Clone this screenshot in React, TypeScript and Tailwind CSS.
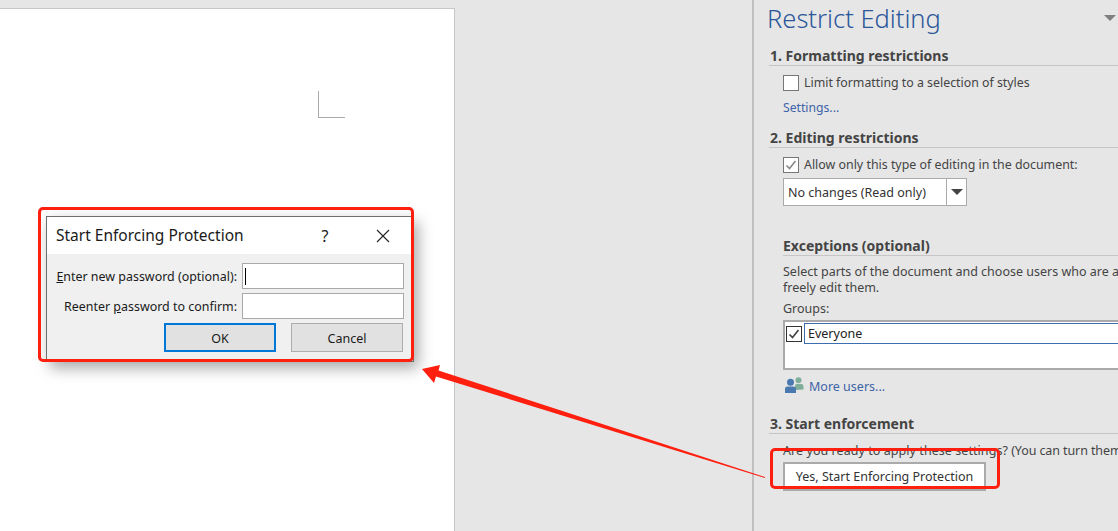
import React from 'react'

const font = "font-['Noto_Sans',sans-serif]"

const SectionHead = ({ children, className = '' }: { children: React.ReactNode; className?: string }) => (
	<div className={`border-b border-b-[#c6c6c6] text-[14px] font-bold leading-[19px] text-[#444444] ${className}`}>{children}</div>
)

const Check = ({ checked = false, dark = false }: { checked?: boolean; dark?: boolean }) => (
	<div className={`flex h-[16px] w-[16px] shrink-0 items-center justify-center border bg-white ${dark ? 'border-[#333333]' : 'border-[#777777]'}`}>
		{checked && (
			<svg width="12" height="12" viewBox="0 0 12 12" fill="none">
				<path d="M1.5 6.5 L4.5 9.5 L10.5 2" stroke={dark ? '#444444' : '#8a8a8a'} strokeWidth="1.7" />
			</svg>
		)}
	</div>
)

const UsersIcon = () => (
	<svg width="19" height="18" viewBox="0 0 19 18" className="shrink-0">
		<circle cx="13.5" cy="3.2" r="3" fill="#7fae9b" />
		<path d="M10 13 V9 Q10 7 12 7 H16 Q18.500 7 18.500 9 V12.500 Z" fill="#7fae9b" />
		<circle cx="5.500" cy="5.200" r="3.500" fill="#4a78b0" />
		<path d="M0 16 V12 Q0 9.500 2.500 9.500 H8 Q11 9.500 11 12 V16 Z" fill="#4a78b0" />
	</svg>
)

const Dialog = () => (
	<div className="absolute left-[46px] top-[216px] flex h-[146px] w-[368px] flex-col border border-[#6f6f6f] bg-[#f0f0f0] shadow-[4px_6px_14px_rgba(0,0,0,0.35)]">
		<div className="flex h-[37px] items-center bg-white pl-[9px] text-[15.5px] text-[#1a1a1a]">
			<span className="w-[249px] whitespace-nowrap">Start Enforcing Protection</span>
			<span className="w-[40px] text-center text-[16px]">?</span>
			<svg width="14" height="14" viewBox="0 0 14 14" fill="none" className="ml-[31px]">
				<path d="M1 1 L13 13 M13 1 L1 13" stroke="#222222" strokeWidth="1.100" />
			</svg>
		</div>
		<div className="flex flex-col gap-[4px] pl-[9px] pt-[9px] text-[12.450px] text-[#1a1a1a]">
			<div className="flex h-[26px] items-center">
				<span className="w-[181px] whitespace-nowrap pt-[2px] text-right"><u>E</u>nter new password (optional):</span>
				<div className="ml-[5px] flex h-[26px] w-[162px] items-center border border-[#a9a9a9] bg-white pl-[2px]">
					<div className="h-[17px] w-px bg-black" />
				</div>
			</div>
			<div className="flex h-[26px] items-center">
				<span className="w-[181px] whitespace-nowrap pt-[2px] text-right">Reenter <u>p</u>assword to confirm:</span>
				<div className="ml-[5px] h-[26px] w-[162px] border border-[#a9a9a9] bg-white" />
			</div>
		</div>
		<div className="mt-[4px] flex gap-[15px] pl-[117px] text-[12.500px] text-[#1a1a1a]">
			<div className="flex h-[29px] w-[112px] items-center justify-center border-2 border-[#0078d7] bg-[#e1e1e1] pt-[3px]">OK</div>
			<div className="flex h-[29px] w-[112px] items-center justify-center border border-[#adadad] bg-[#e1e1e1] pt-[3px]">Cancel</div>
		</div>
	</div>
)

const Annotations = () => (
	<>
		<div className="absolute left-[38px] top-[207px] h-[155px] w-[376px] rounded-[5px] border-[3px] border-[#ff1f0f]" />
		<div className="absolute left-[770px] top-[448px] h-[41px] w-[230px] rounded-[5px] border-[3px] border-[#ff1f0f]" />
		<svg className="pointer-events-none absolute inset-0" width="1118" height="531" viewBox="0 0 1118 531">
			<polygon points="422,369 440,365 438.500,370.500 765,477 765,478 436,376.500 434,383" fill="#ff1f0f" />
		</svg>
	</>
)

export default function App() {
	return (
		<div className={`relative flex h-[531px] w-[1118px] overflow-hidden bg-[#e6e6e6] ${font}`}>
			<div className="w-[752px] shrink-0 pt-[8px]">
				<div className="h-full w-[455px] border-r border-t border-[#c6c6c6] bg-white pl-[318px] pt-[82px]">
					<div className="h-[27px] w-[27px] border-b border-l border-[#aaaaaa]" />
				</div>
			</div>

			<div className="min-w-0 flex-1 overflow-hidden border-l-2 border-l-[#c0c0c0] text-[12.500px] leading-[17px] text-[#444444]">
				<div className="flex h-[37px] items-center pl-[13px] pr-[2px]">
					<span className="flex-1 text-[25.5px] font-light text-[#2b579a]">Restrict Editing</span>
					<div className="mb-[2px] h-0 w-0 border-x-[6px] border-t-[6px] border-x-transparent border-t-[#808080]" />
				</div>

				<div className="pl-[15px]">
					<SectionHead className="mt-[9px] pl-[1px]">1. Formatting restrictions</SectionHead>
					<div className="ml-[14px] mt-[8px] flex items-center gap-[5px]">
						<Check />
						<span className="whitespace-nowrap text-[12.350px]">Limit formatting to a selection of styles</span>
					</div>
					<div className="ml-[14px] mt-[8px] text-[12.200px] text-[#3d63a8]">Settings...</div>

					<SectionHead className="mt-[12px] pl-[1px]">2. Editing restrictions</SectionHead>
					<div className="ml-[14px] mt-[8px] flex items-center gap-[5px]">
						<Check checked />
						<span className="whitespace-nowrap text-[12.400px]">Allow only this type of editing in the document:</span>
					</div>
					<div className="ml-[14px] mt-[5px] flex h-[28px] w-[184px] items-center border border-[#aaaaaa] bg-white">
						<span className="flex-1 pl-[4px] text-[#333333]">No changes (Read only)</span>
						<div className="flex h-full w-[20px] items-center justify-center border-l border-l-[#aaaaaa]">
							<div className="h-0 w-0 border-x-[6px] border-t-[6px] border-x-transparent border-t-[#444444]" />
						</div>
					</div>

					<div className="ml-[14px]">
						<SectionHead className="mt-[30px]">Exceptions (optional)</SectionHead>
						<div className="mt-[8px] whitespace-nowrap leading-[16px]">Select parts of the document and choose users who are allowed to</div>
						<div className="whitespace-nowrap leading-[16px]">freely edit them.</div>
						<div className="mt-[4px]">Groups:</div>
						<div className="mt-[3px] h-[50px] border-2 border-r-0 border-[#aaaaaa] bg-white pl-[1px] pt-[1px]">
							<div className="flex items-center gap-[2px]">
								<Check checked dark />
								<div className="flex h-[21px] flex-1 items-center border border-r-0 border-[#3d6fb0] pl-[3px] text-[#222222]">Everyone</div>
							</div>
						</div>
						<div className="ml-[2px] mt-[7px] flex items-center gap-[5px] text-[#3d63a8]">
							<UsersIcon />
							<span>More users...</span>
						</div>
					</div>

					<SectionHead className="mt-[19px] pl-[1px]">3. Start enforcement</SectionHead>
					<div className="ml-[14px] mt-[8px] whitespace-nowrap">
						<span className="tracking-[0.06px]">Are you ready to apply these settings?</span> <span className="tracking-[-0.1px]">(You can turn them off later)</span>
					</div>
					<div className="ml-[14px] mt-[3px] flex h-[29px] w-[203px] items-center justify-center border-2 border-[#aaaaaa] bg-white text-[#333333]">Yes, Start Enforcing Protection</div>
				</div>
			</div>

			<Dialog />
			<Annotations />
		</div>
	)
}
